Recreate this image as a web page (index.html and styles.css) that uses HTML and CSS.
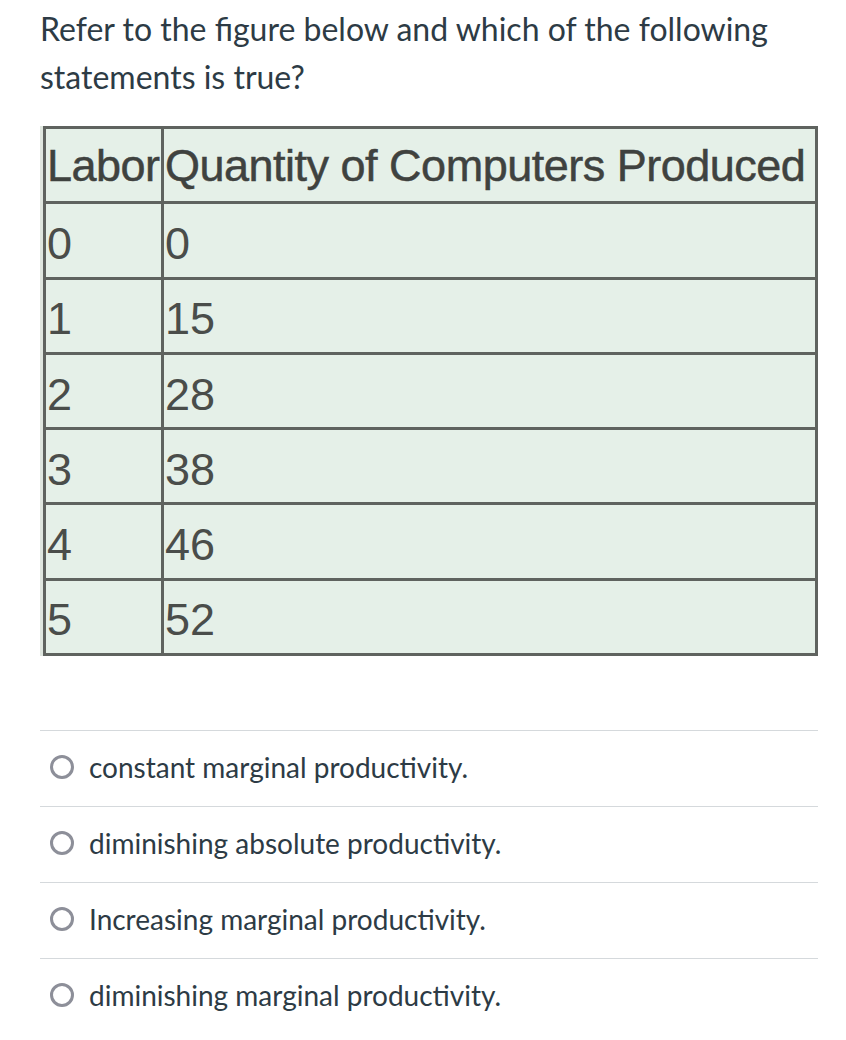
FILE: index.html
```html
<!DOCTYPE html>
<html>
<head>
<meta charset="utf-8">
<link rel="stylesheet" href="styles.css">
</head>
<body>
<div class="page">
  <p class="question">Refer to the figure below and which of the following statements is true?</p>
  <div class="figure">
    <table class="data">
      <tr class="head"><td class="c1">Labor</td><td class="c2">Quantity of Computers Produced</td></tr>
      <tr><td class="c1">0</td><td class="c2">0</td></tr>
      <tr><td class="c1">1</td><td class="c2">15</td></tr>
      <tr><td class="c1">2</td><td class="c2">28</td></tr>
      <tr><td class="c1">3</td><td class="c2">38</td></tr>
      <tr><td class="c1">4</td><td class="c2">46</td></tr>
      <tr><td class="c1">5</td><td class="c2">52</td></tr>
    </table>
  </div>
  <ul class="answers">
    <li class="answer"><span class="radio"></span><span class="label">constant marginal productivity.</span></li>
    <li class="answer"><span class="radio"></span><span class="label">diminishing absolute productivity.</span></li>
    <li class="answer"><span class="radio"></span><span class="label">Increasing marginal productivity.</span></li>
    <li class="answer"><span class="radio"></span><span class="label">diminishing marginal productivity.</span></li>
  </ul>
</div>
</body>
</html>
```

FILE: styles.css
```css
html, body {
  margin: 0;
  padding: 0;
  background: #ffffff;
}

.page {
  width: 778px;
  padding: 5px 0 0 40px;
  font-family: Lato, "Noto Sans", sans-serif;
  color: #2d3b45;
}

.question {
  margin: 0;
  font-size: 32px;
  line-height: 48px;
  width: 770px;
}

.figure {
  margin-top: 25px;
  width: 778px;
  background: #dfe6df;
  padding-left: 3px;
  box-sizing: border-box;
}

.data {
  width: 775px;
  border-collapse: collapse;
  background: #e5f0e8;
  font-family: "Liberation Sans", Arial, sans-serif;
  color: #4a4d4a;
  table-layout: fixed;
}

.data td {
  border: 3px solid #5f635f;
  height: 66.3px;
  padding: 6px 0 0 1px;
  font-size: 45px;
  line-height: 45px;
  vertical-align: middle;
  white-space: nowrap;
}

.data .c1 {
  width: 114px;
}

.data .head td {
  padding-top: 0;
  height: 72.3px;
  font-size: 45px;
  letter-spacing: -0.5px;
  color: #3f423f;
  -webkit-text-stroke: 0.5px #3f423f;
}

.answers {
  list-style: none;
  margin: 74px 0 0 0;
  padding: 0;
  width: 778px;
}

.answer {
  display: flex;
  align-items: center;
  height: 71px;
  padding-bottom: 4px;
  border-top: 1px solid #d5d9dc;
  font-size: 28px;
}

.radio {
  width: 18px;
  height: 18px;
  border: 3.5px solid #8d8f99;
  border-radius: 50%;
  margin-left: 10px;
  margin-right: 15px;
  flex: none;
}

.label {
  line-height: 34px;
}
```
